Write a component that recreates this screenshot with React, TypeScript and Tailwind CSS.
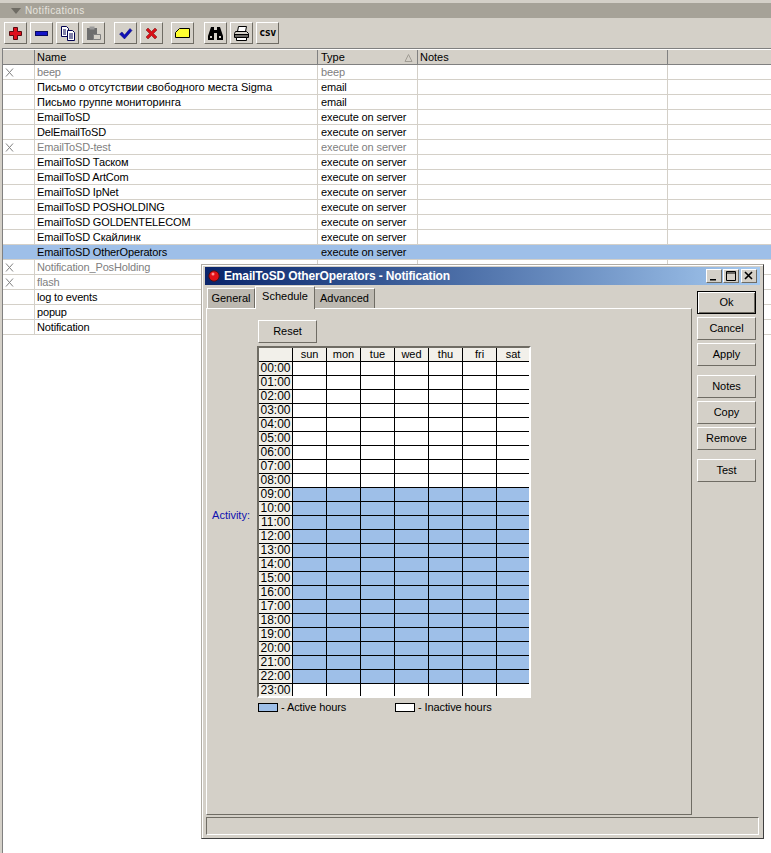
// rows below the dialog have their Type column covered, so it is left empty
const rows = [
  { off: true, name: 'beep', type: 'beep' },
  { cyr: true, name: 'Письмо о отсутствии свободного места Sigma', type: 'email' },
  { cyr: true, name: 'Письмо группе мониторинга', type: 'email' },
  { name: 'EmailToSD', type: 'execute on server' },
  { name: 'DelEmailToSD', type: 'execute on server' },
  { off: true, name: 'EmailToSD-test', type: 'execute on server' },
  { name: 'EmailToSD Таском', type: 'execute on server' },
  { name: 'EmailToSD ArtCom', type: 'execute on server' },
  { name: 'EmailToSD IpNet', type: 'execute on server' },
  { name: 'EmailToSD POSHOLDING', type: 'execute on server' },
  { name: 'EmailToSD GOLDENTELECOM', type: 'execute on server' },
  { name: 'EmailToSD Скайлинк', type: 'execute on server' },
  { name: 'EmailToSD OtherOperators', type: 'execute on server', selected: true },
  { off: true, name: 'Notification_PosHolding', type: '' },
  { off: true, name: 'flash', type: '' },
  { name: 'log to events', type: '' },
  { name: 'popup', type: '' },
  { name: 'Notification', type: '' },
]

const days = ['sun', 'mon', 'tue', 'wed', 'thu', 'fri', 'sat']
const hours = Array.from({ length: 24 }, (_, i) => i)
const raised = 'border border-t-white border-l-white border-r-[#6f6c64] border-b-[#6f6c64]'

function ToolButton({ children, gap }: { children: React.ReactNode; gap?: string }) {
  return (
    <button className={`${gap ?? 'ml-[3px]'} w-[23px] h-[22px] flex items-center justify-center bg-[#d4d0c8] ${raised}`}>
      {children}
    </button>
  )
}

function Toolbar() {
  return (
    <div className="h-[30px] pl-[4px] pt-[4px] flex items-start">
      <ToolButton gap="ml-0">
        <svg width="15" height="15" viewBox="0 0 15 15"><path d="M5.5 1.5h4v4h4v4h-4v4h-4v-4h-4v-4h4z" fill="#e0101c" stroke="#5a0a10" /></svg>
      </ToolButton>
      <ToolButton>
        <svg width="15" height="15" viewBox="0 0 15 15"><rect x="1.5" y="5.5" width="12" height="4" fill="#1414c8" stroke="#0a0a60" /></svg>
      </ToolButton>
      <ToolButton>
        <svg width="16" height="15" viewBox="0 0 16 15"><path d="M1.5 0.5h5l2 2v8h-7z" fill="#fff" stroke="#000050" /><path d="M3 4h3M3 6h3M3 8h3" stroke="#000050" /><path d="M7.5 4.5h5l2 2v8h-7z" fill="#fff" stroke="#000050" /><path d="M9 8h4M9 10h4M9 12h4" stroke="#000050" /></svg>
      </ToolButton>
      <ToolButton>
        <svg width="16" height="15" viewBox="0 0 16 15"><path d="M1 2h10v12H1z" fill="#6e6e6e" /><path d="M3.5 0.5h5v3h-5z" fill="#9a9a9a" /><path d="M7.5 8.5h7v5h-7z" fill="#d4d0c8" stroke="#808080" /></svg>
      </ToolButton>
      <ToolButton gap="ml-[9px]">
        <svg width="15" height="15" viewBox="0 0 15 15"><path d="M1.5 8l2.5-2 2.5 3L12 2.5l2 2L6.5 13z" fill="#1010b8" stroke="#0a0a70" strokeWidth="0.5" /></svg>
      </ToolButton>
      <ToolButton>
        <svg width="15" height="15" viewBox="0 0 15 15"><path d="M2 4l2-2 3.5 3.5L11 2l2 2-3.5 3.5L13 11l-2 2-3.5-3.5L4 13l-2-2 3.5-3.5z" fill="#d81018" stroke="#701010" strokeWidth="0.5" /></svg>
      </ToolButton>
      <ToolButton gap="ml-[8px]">
        <svg width="17" height="14" viewBox="0 0 17 14"><path d="M1.5 6.5l4-4h10v9h-14z" fill="#ffff30" stroke="#000" /></svg>
      </ToolButton>
      <ToolButton gap="ml-[10px]">
        <svg width="17" height="15" viewBox="0 0 17 15"><path d="M4 1h3v3h3V1h3l3 9v4h-6V7H7v7H1v-4z" fill="#000" /><path d="M3 10h2v2H3zM12 10h2v2h-2z" fill="#d4d0c8" /></svg>
      </ToolButton>
      <ToolButton>
        <svg width="17" height="15" viewBox="0 0 17 15"><path d="M5.5 0.5h8l-1 5h-8z" fill="#fff" stroke="#000" /><path d="M2.5 5.5h11l2 2v4h-14v-4z" fill="#d4d0c8" stroke="#000" /><path d="M1.5 8.5h14M1.5 10h14" stroke="#000" /><path d="M3.5 11.5h10v3h-10z" fill="#fff" stroke="#000" /></svg>
      </ToolButton>
      <ToolButton>
        <span className="text-[10px] leading-none font-bold font-['DejaVu_Sans_Mono',monospace] tracking-[-0.6px] text-black">csv</span>
      </ToolButton>
    </div>
  )
}

function HeaderCell({ w, pad, children }: { w: string; pad: string; children?: React.ReactNode }) {
  return (
    <div className={`${w} ${pad} relative h-full border-r border-r-[#808080] leading-[15px] text-black`}>
      {children}
    </div>
  )
}

function List() {
  return (
    <div className="ml-[2px] flex-1 bg-white border-t border-t-[#808080] border-l border-l-[#808080]">
      <div className="h-[16px] flex bg-[#d4d0c8] border-t border-t-white border-b border-b-[#808080]">
        <HeaderCell w="w-[32px]" pad="" />
        <HeaderCell w="w-[283px]" pad="pl-[2px]">Name</HeaderCell>
        <HeaderCell w="w-[100px]" pad="pl-[3px]">
          Type
          <svg className="absolute right-[4px] top-[4px]" width="9" height="8" viewBox="0 0 9 8"><path d="M4.5 0.5L8 7.5H1z" fill="none" stroke="#a09c94" /></svg>
        </HeaderCell>
        <HeaderCell w="w-[250px]" pad="pl-[2px]">Notes</HeaderCell>
      </div>
      {rows.map((row) => {
        const line = row.selected ? 'border-r-transparent' : 'border-r-[#d4d0c8]'
        return (
          <div
            key={row.name}
            className={`h-[15px] flex leading-[14px] border-b border-b-[#d4d0c8] ${row.selected ? 'bg-[#9ebfe8]' : ''} ${row.off ? 'text-[#808080]' : 'text-black'}`}
          >
            <div className={`w-[32px] h-full border-r ${line} flex items-center pl-[2px]`}>
              {row.off && (
                <svg width="9" height="9" viewBox="0 0 9 9"><path d="M1 0.5l7 8M8 0.5l-7 8" stroke="#808080" fill="none" /></svg>
              )}
            </div>
            <div className={`w-[283px] h-full pl-[2px] border-r ${line} whitespace-nowrap ${row.cyr ? '' : 'tracking-[-0.16px]'}`}>{row.name}</div>
            <div className={`w-[100px] h-full pl-[3px] border-r ${line} whitespace-nowrap tracking-[-0.12px]`}>{row.type}</div>
            <div className={`w-[250px] h-full border-r ${line}`} />
          </div>
        )
      })}
    </div>
  )
}

function SideButton({ label, strong, gap }: { label: string; strong?: boolean; gap: string }) {
  return (
    <button
      className={`${gap} w-[59px] h-[23px] bg-[#d4d0c8] text-black leading-[21px] text-center ${strong ? 'border border-black shadow-[inset_1px_1px_0_#fff,inset_-1px_-1px_0_#6f6c64]' : raised}`}
    >
      {label}
    </button>
  )
}

function ScheduleGrid() {
  return (
    <div className="w-[274px] bg-white border-t-2 border-l-2 border-t-[#6f6c64] border-l-[#6f6c64] border-r-2 border-r-white border-b-2 border-b-white">
      <div className="flex h-[14px] bg-[#f2f0ea] border-b border-b-black">
        <div className="w-[34px] border-r border-r-black" />
        {days.map((d) => (
          <div key={d} className="w-[34px] last:w-[32px] text-center leading-[13px] border-r border-r-black last:border-r-0">{d}</div>
        ))}
      </div>
      {hours.map((h) => (
        <div key={h} className={`flex ${h < 23 ? 'h-[14px] border-b border-b-black' : 'h-[12px]'}`}>
          <div className="w-[34px] bg-[#f2f0ea] text-[12px] text-center leading-[13px] border-r border-r-black">
            {String(h).padStart(2, '0')}:00
          </div>
          {days.map((d) => (
            <div key={d} className={`w-[34px] last:w-[32px] border-r border-r-black last:border-r-0 ${h >= 9 && h <= 22 ? 'bg-[#9ebfe8]' : 'bg-white'}`} />
          ))}
        </div>
      ))}
    </div>
  )
}

function Dialog() {
  return (
    <div className="absolute left-[201px] top-[264px] w-[563px] h-[575px] pt-[2px] px-[3px] pb-[3px] bg-[#d4d0c8] border border-t-[#b0aca4] border-l-[#b0aca4] border-r-[#404040] border-b-[#404040] shadow-[inset_1px_1px_0_#fff] flex flex-col">
      <div className="h-[18px] shrink-0 flex items-center pl-[3px] pr-[3px] bg-gradient-to-r from-[#0a246a] to-[#a6caf0]">
        <svg width="12" height="12" viewBox="0 0 12 12"><circle cx="6" cy="6" r="5.2" fill="#e01018" stroke="#501010" /><circle cx="5" cy="4" r="1.5" fill="#ff9090" /></svg>
        <span className="ml-[4px] flex-1 text-[12px] font-bold text-white leading-[18px] tracking-[-0.15px]">EmailToSD OtherOperators - Notification</span>
        <div className="flex">
          <div className={`w-[16px] h-[14px] flex items-center justify-center bg-[#d4d0c8] ${raised}`}>
            <svg width="10" height="10" viewBox="0 0 10 10"><path d="M1 8h6v1.5H1z" fill="#000" /></svg>
          </div>
          <div className={`w-[16px] h-[14px] ml-[1px] flex items-center justify-center bg-[#d4d0c8] ${raised}`}>
            <svg width="10" height="10" viewBox="0 0 10 10"><path d="M0.5 0.5h9v9h-9zM1 2h8" fill="none" stroke="#000" /></svg>
          </div>
          <div className={`w-[16px] h-[14px] ml-[2px] flex items-center justify-center bg-[#d4d0c8] ${raised}`}>
            <svg width="10" height="10" viewBox="0 0 10 10"><path d="M1 1l7 7M8 1l-7 7" stroke="#000" strokeWidth="1.6" fill="none" /></svg>
          </div>
        </div>
      </div>

      <div className="flex-1 flex min-h-0">
        <div className="w-[486px] ml-[1px] flex flex-col">
          <div className="h-[23px] shrink-0 flex items-end">
            <div className="w-[48px] h-[20px] ml-[1px] bg-[#bdb9b1] border-t border-l border-t-white border-l-white border-r border-r-[#6f6c64] text-center leading-[18px]">General</div>
            <div className="w-[60px] h-[23px] bg-[#d4d0c8] border-t border-l border-t-white border-l-white border-r border-r-[#6f6c64] text-center leading-[18px] relative z-10 -mb-[1px]">Schedule</div>
            <div className="w-[60px] h-[20px] bg-[#bdb9b1] border-t border-t-white border-r border-r-[#6f6c64] text-center leading-[18px]">Advanced</div>
          </div>
          <div className="h-[507px] shrink-0 border border-t-white border-l-white border-r-[#6f6c64] border-b-[#6f6c64] flex">
            <div className="w-[50px] shrink-0 pt-[199px] pr-[7px] text-right leading-[14px] text-[#1010b0]">Activity:</div>
            <div className="pt-[11px]">
              <button className={`w-[59px] h-[23px] ml-[1px] mb-[3px] block text-center bg-[#d4d0c8] leading-[21px] ${raised}`}>Reset</button>
              <ScheduleGrid />
              <div className="flex h-[18px] items-center">
                <span className="w-[20px] h-[9px] ml-[1px] bg-[#9ebfe8] border border-black" />
                <span className="ml-[3px] w-[114px] tracking-[-0.1px]">- Active hours</span>
                <span className="w-[20px] h-[9px] bg-white border border-black" />
                <span className="ml-[3px] tracking-[-0.1px]">- Inactive hours</span>
              </div>
            </div>
          </div>
          <div className="w-[553px] h-[18px] mt-[2px] shrink-0 border border-t-[#6f6c64] border-l-[#6f6c64] border-r-white border-b-white" />
        </div>
        <div className="ml-[5px] mt-[6px] flex flex-col">
          <SideButton label="Ok" strong gap="" />
          <SideButton label="Cancel" gap="mt-[3px]" />
          <SideButton label="Apply" gap="mt-[3px]" />
          <SideButton label="Notes" gap="mt-[9px]" />
          <SideButton label="Copy" gap="mt-[3px]" />
          <SideButton label="Remove" gap="mt-[3px]" />
          <SideButton label="Test" gap="mt-[9px]" />
        </div>
      </div>
    </div>
  )
}

export default function App() {
  return (
    <div className="relative w-[771px] h-[853px] overflow-hidden flex flex-col bg-[#d4d0c8] text-[11px] text-black font-['Liberation_Sans',Arial,sans-serif]">
      <div className="h-[15px] mt-[3px] shrink-0 flex items-center bg-[#a6a298]">
        <svg className="ml-[11px]" width="10" height="6" viewBox="0 0 10 6"><path d="M0 0h10L5 6z" fill="#6f6c64" /></svg>
        <span className="ml-[4px] text-[10px] tracking-[0.4px] text-[#e6e4de]">Notifications</span>
      </div>
      <Toolbar />
      <List />
      <Dialog />
    </div>
  )
}
